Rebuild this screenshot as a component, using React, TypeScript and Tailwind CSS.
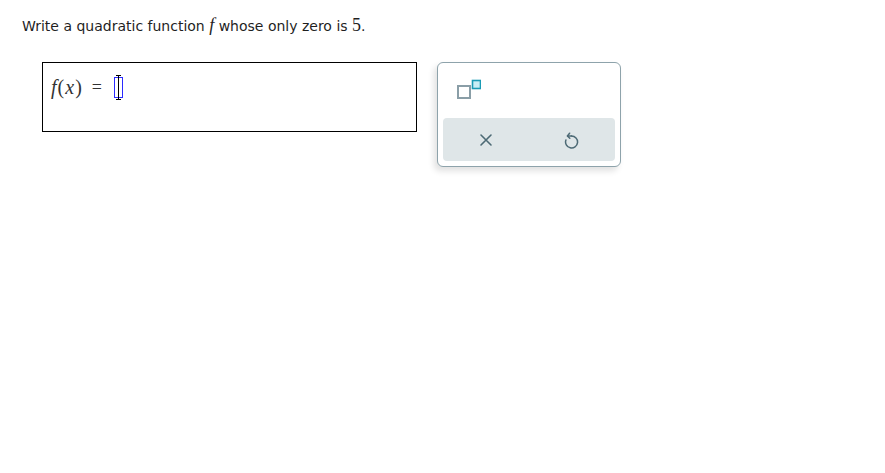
import React from 'react';

const SuperscriptIcon = () => (
  <svg width="28" height="24" viewBox="0 0 28 24">
    <rect x="5" y="11" width="12" height="12" fill="#fff" stroke="#8a9ea7" strokeWidth="2" />
    <rect x="19.5" y="5.5" width="8" height="8" fill="#c8eef5" stroke="#1a9bb5" strokeWidth="1.6" />
  </svg>
);

const CloseIcon = () => (
  <svg width="14" height="14" viewBox="0 0 14 14" fill="none" stroke="#4d6a75" strokeWidth="1.6" strokeLinecap="round">
    <path d="M2 2 L12 12 M12 2 L2 12" />
  </svg>
);

const UndoIcon = () => (
  <svg width="16" height="18" viewBox="0 0 16 18" fill="none" stroke="#4d6a75" strokeWidth="1.5" strokeLinecap="round" strokeLinejoin="round">
    <path d="M7.5 5 A6 6 0 1 1 1.9 9" />
    <path d="M7.5 5 H3.6" />
    <path d="M5.6 2.2 L3.4 5 L5.8 7.3" />
  </svg>
);

const App = () => {
  return (
    <div className="min-h-screen w-[885px] bg-white" style={{ fontFamily: 'Verdana, "DejaVu Sans", sans-serif' }}>
      <p className="pt-[16px] pl-[22px] text-[14px] text-[#1f1f1f] leading-[20px] h-[36px]">
        Write a quadratic function{' '}
        <span className="italic text-[18px] leading-none" style={{ fontFamily: '"Liberation Serif", serif' }}>f</span>
        {' '}whose only zero is{' '}
        <span className="text-[18px] leading-none" style={{ fontFamily: '"Liberation Serif", serif' }}>5</span>.
      </p>

      <div className="flex items-start gap-[20px] pl-[42px] pt-[26px]">
        <div className="w-[375px] h-[70px] border border-black px-[8px] pt-[9px]">
          <div className="flex items-center text-[20px] text-[#333]" style={{ fontFamily: '"Liberation Serif", serif' }}>
            <span className="italic">f</span>
            <span className="ml-[1px]">(</span>
            <span className="italic ml-[1px]">x</span>
            <span className="ml-[1px]">)</span>
            <span className="ml-[10px] mr-[12px] text-[18px]">=</span>
            <span className="relative inline-block w-[9px] h-[21px] border border-[#2b2bff]">
              <span className="absolute left-[3px] top-[-3px] h-[25px] w-px bg-black" />
              <span className="absolute left-[1px] top-[-3px] h-px w-[5px] bg-black" />
              <span className="absolute left-[1px] bottom-[-3px] h-px w-[5px] bg-black" />
            </span>
          </div>
        </div>

        <div className="w-[184px] h-[105px] rounded-[6px] border border-[#8ea3ab] bg-white shadow-[-3px_4px_6px_rgba(0,0,0,0.12)] px-[5px] pt-[12px] pb-[5px] flex flex-col">
          <div className="h-[40px] pl-[10px] flex items-start">
            <SuperscriptIcon />
          </div>
          <div className="mt-auto h-[43px] rounded-[4px] bg-[#dfe6e8] flex items-center justify-around">
            <button className="w-[60px] h-[30px] flex items-center justify-center">
              <CloseIcon />
            </button>
            <button className="w-[60px] h-[30px] flex items-center justify-center">
              <UndoIcon />
            </button>
          </div>
        </div>
      </div>
    </div>
  );
};

export default App;
